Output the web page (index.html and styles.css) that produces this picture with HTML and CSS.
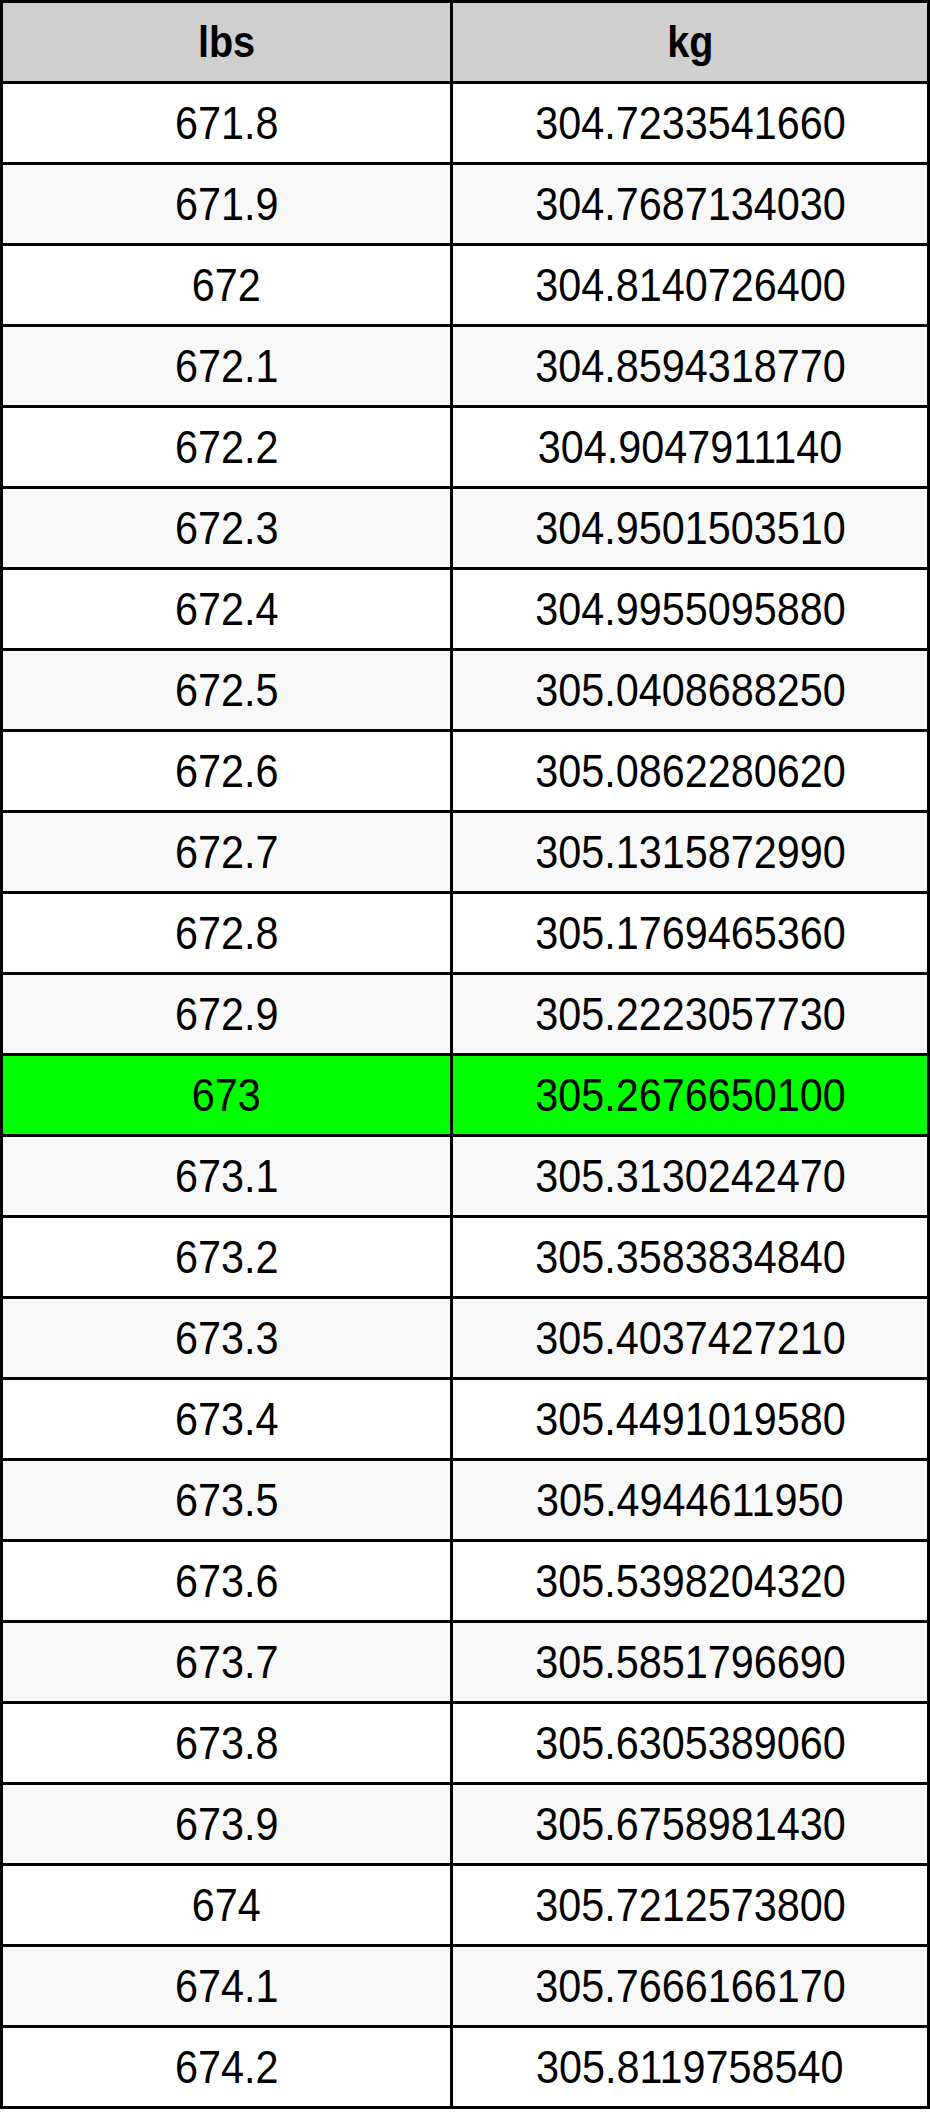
FILE: index.html
```html
<!DOCTYPE html>
<html>
<head>
<meta charset="utf-8">
<link rel="stylesheet" href="styles.css">
</head>
<body>
<table class="conv">
<thead>
<tr><th class="c1"><span class="t">lbs</span></th><th class="c2"><span class="t">kg</span></th></tr>
</thead>
<tbody>
<tr><td><span class="t">671.8</span></td><td><span class="t">304.7233541660</span></td></tr>
<tr><td><span class="t">671.9</span></td><td><span class="t">304.7687134030</span></td></tr>
<tr><td><span class="t">672</span></td><td><span class="t">304.8140726400</span></td></tr>
<tr><td><span class="t">672.1</span></td><td><span class="t">304.8594318770</span></td></tr>
<tr><td><span class="t">672.2</span></td><td><span class="t">304.9047911140</span></td></tr>
<tr><td><span class="t">672.3</span></td><td><span class="t">304.9501503510</span></td></tr>
<tr><td><span class="t">672.4</span></td><td><span class="t">304.9955095880</span></td></tr>
<tr><td><span class="t">672.5</span></td><td><span class="t">305.0408688250</span></td></tr>
<tr><td><span class="t">672.6</span></td><td><span class="t">305.0862280620</span></td></tr>
<tr><td><span class="t">672.7</span></td><td><span class="t">305.1315872990</span></td></tr>
<tr><td><span class="t">672.8</span></td><td><span class="t">305.1769465360</span></td></tr>
<tr><td><span class="t">672.9</span></td><td><span class="t">305.2223057730</span></td></tr>
<tr class="hl"><td><span class="t">673</span></td><td><span class="t">305.2676650100</span></td></tr>
<tr><td><span class="t">673.1</span></td><td><span class="t">305.3130242470</span></td></tr>
<tr><td><span class="t">673.2</span></td><td><span class="t">305.3583834840</span></td></tr>
<tr><td><span class="t">673.3</span></td><td><span class="t">305.4037427210</span></td></tr>
<tr><td><span class="t">673.4</span></td><td><span class="t">305.4491019580</span></td></tr>
<tr><td><span class="t">673.5</span></td><td><span class="t">305.4944611950</span></td></tr>
<tr><td><span class="t">673.6</span></td><td><span class="t">305.5398204320</span></td></tr>
<tr><td><span class="t">673.7</span></td><td><span class="t">305.5851796690</span></td></tr>
<tr><td><span class="t">673.8</span></td><td><span class="t">305.6305389060</span></td></tr>
<tr><td><span class="t">673.9</span></td><td><span class="t">305.6758981430</span></td></tr>
<tr><td><span class="t">674</span></td><td><span class="t">305.7212573800</span></td></tr>
<tr><td><span class="t">674.1</span></td><td><span class="t">305.7666166170</span></td></tr>
<tr><td><span class="t">674.2</span></td><td><span class="t">305.8119758540</span></td></tr>
</tbody>
</table>
</body>
</html>
```
FILE: styles.css
```css
html, body {
  margin: 0;
  padding: 0;
  background: #ffffff;
}
.conv {
  width: 930px;
  table-layout: fixed;
  border-collapse: separate;
  border-spacing: 0;
  border-top: 3px solid #000;
  border-left: 3px solid #000;
  font-family: "Liberation Sans", Arial, sans-serif;
  color: #000;
}
.conv th, .conv td {
  padding: 0;
  border-right: 3px solid #000;
  border-bottom: 3px solid #000;
  text-align: center;
  line-height: 78px;
  height: 78px;
  overflow: hidden;
  white-space: nowrap;
}
.conv th.c1 {
  width: 447px;
}
.conv th {
  background: #cfcfcf;
  font-size: 45px;
  font-weight: bold;
}
.conv td {
  font-size: 47px;
  font-weight: normal;
}
.conv tbody tr:nth-child(even) td {
  background: #f8f8f8;
}
.conv tbody tr.hl td {
  background: #00ff00;
}
.t {
  display: inline-block;
  vertical-align: top;
  transform: scaleX(0.88);
}
```
